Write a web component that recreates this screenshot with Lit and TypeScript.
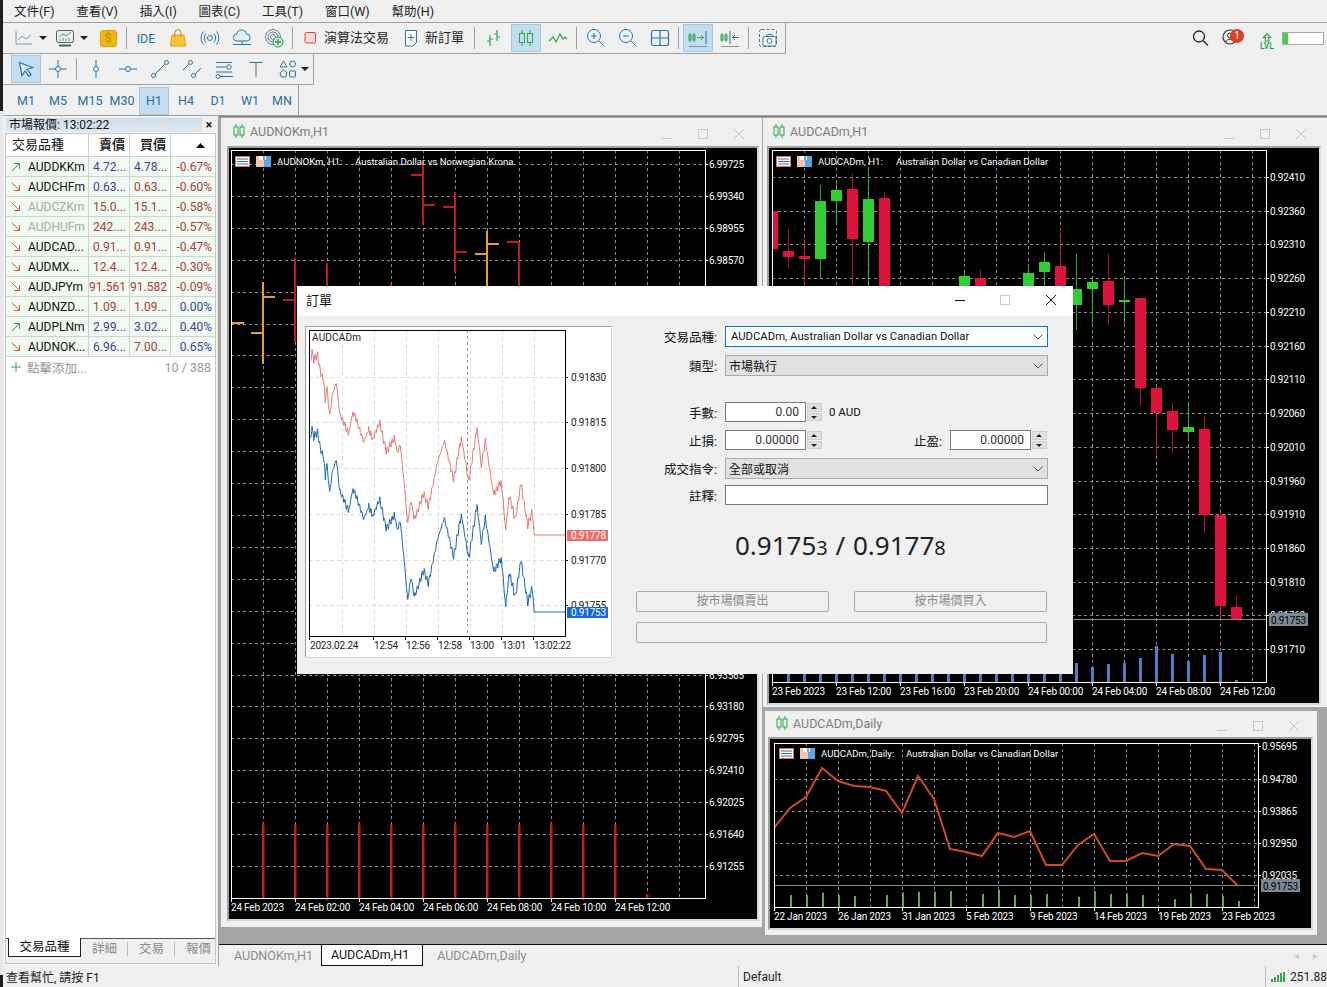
import { LitElement, html, css, svg } from 'lit';
import { customElement, property } from 'lit/decorators.js';

// ---- toolbar icons ----
const i = (body: unknown) => html`<svg class="ic" viewBox="0 0 20 20" width="20" height="20" fill="none">${body}</svg>`;
const BLUE = '#2b73a8';
const GREEN = '#2fa84f';
const icons: Record<string, unknown> = {
  line: i(svg`<path d="M2 3v13h16" stroke="#8a99a6"/><path d="M4 12l4-4 4 3 5-4" stroke="#5aa3d0"/>`),
  monitor: i(svg`<rect x="1.5" y="2.5" width="17" height="12" rx="2" stroke="#4a5a66"/><path d="M4 9l4-3 3 2 5-4" stroke="#2fa84f"/><path d="M5 13v-2M8 13v-3M11 13v-2M14 13v-3" stroke="#2fa84f"/><path d="M4 17.5h12" stroke="#4a5a66" stroke-width="2"/>`),
  bag: i(svg`<path d="M4 7h12l1.5 11h-15z" fill="#f7c531" stroke="#e0a010"/><path d="M7 9V4.5a3 3 0 016 0V9" stroke="#c98a10"/>`),
  signal: i(svg`<circle cx="10" cy="10" r="2.5" stroke="${BLUE}"/><path d="M6 5.5a7 7 0 000 9M14 5.5a7 7 0 010 9M3.5 3.5a10 10 0 000 13M16.5 3.5a10 10 0 010 13" stroke="${BLUE}"/>`),
  cloud: i(svg`<path d="M5 13a3.5 3.5 0 01-.3-7A5 5 0 0114.5 6a3.5 3.5 0 01.5 7z" fill="#dff0fa" stroke="${BLUE}"/><path d="M1 16.5h18M10 13v3" stroke="${BLUE}"/>`),
  vps: i(svg`<circle cx="9" cy="9" r="7.5" stroke="#5c8c96"/><circle cx="9" cy="9" r="5" stroke="#5c8c96"/><circle cx="9" cy="9" r="2.5" stroke="#5c8c96"/><circle cx="14" cy="14" r="5" fill="#cdeed6" stroke="#2a9d4a"/><path d="M14 11v6M11 14h6" stroke="#2a9d4a" stroke-width="1.3"/>`),
  stop: i(svg`<rect x="5" y="4.5" width="10.5" height="10.5" rx="1.5" fill="#fbdcd8" stroke="#d8443c"/>`),
  order: i(svg`<path d="M4.5 2.5h11v12l-3.5 3.5h-7.5z" fill="#fff" stroke="${BLUE}"/><path d="M10 6v7M6.5 9.5h7" stroke="${BLUE}"/>`),
  bars: i(svg`<path d="M6 7v11M6 13H3M6 11h3M13 2v11M13 6h-3M13 9h3" stroke="${GREEN}" stroke-width="1.2"/>`),
  candles: i(svg`<path d="M6 2v3M6 15v3M14 2v3M14 15v3" stroke="${GREEN}"/><rect x="3.5" y="5.5" width="5" height="9" stroke="${GREEN}"/><rect x="11.5" y="5.5" width="5" height="9" stroke="${GREEN}"/>`),
  zig: i(svg`<path d="M1 13l4-4 3 5 4-8 3 5 2-2 2 2" stroke="${GREEN}" stroke-width="1.2"/>`),
  zin: i(svg`<circle cx="8" cy="8" r="6.5" stroke="${BLUE}" fill="#eaf5fb"/><path d="M12.5 12.5l6 6" stroke="${BLUE}"/><path d="M8 5v6M5 8h6" stroke="${BLUE}"/>`),
  zout: i(svg`<circle cx="8" cy="8" r="6.5" stroke="${BLUE}" fill="#eaf5fb"/><path d="M12.5 12.5l6 6" stroke="${BLUE}"/><path d="M5 8h6" stroke="${BLUE}"/>`),
  tile: i(svg`<rect x="1.5" y="2.5" width="17" height="15" rx="2" fill="#eaf5fb" stroke="${BLUE}" stroke-width="1.2"/><path d="M10 3v14M2 10h16" stroke="${BLUE}" stroke-width="1.2"/>`),
  auto: i(svg`<path d="M2 5v9M6 5v9" stroke="${GREEN}"/><rect x="1" y="7" width="2" height="5" stroke="${GREEN}" fill="none"/><rect x="5" y="7" width="2" height="5" stroke="${GREEN}" fill="none"/><path d="M9 9.5h6M13 7l2.5 2.5L13 12" stroke="${GREEN}"/><path d="M18 3v13" stroke="${BLUE}"/><path d="M1 18.5h18" stroke="#909090"/>`),
  shift: i(svg`<path d="M2 5v9M6 5v9" stroke="${GREEN}"/><rect x="1" y="7" width="2" height="5" stroke="${GREEN}" fill="none"/><rect x="5" y="7" width="2" height="5" stroke="${GREEN}" fill="none"/><path d="M10 3v13" stroke="${BLUE}"/><path d="M19 9.5h-6M15 7l-2.5 2.5L15 12" stroke="${BLUE}"/><path d="M1 18.5h18" stroke="#909090"/>`),
  shot: i(svg`<rect x="1.5" y="1.5" width="17" height="17" rx="2" stroke="#3f6f8f" stroke-dasharray="3 2"/><rect x="5" y="8.5" width="13" height="9.5" rx="1.5" fill="#fff" stroke="${BLUE}"/><circle cx="11.5" cy="13" r="2.5" stroke="${BLUE}"/><path d="M8 8.5l1.5-2h4l1.5 2" stroke="${BLUE}"/>`),
  cursor: i(svg`<path d="M3.5 3.5l13 5-5.5 2 4 5-2 1.8-4-5.3-3 4.5z" fill="#d6eaf8" stroke="${BLUE}" stroke-width="1.2"/>`),
  cross: i(svg`<circle cx="10" cy="10" r="2.5" stroke="${BLUE}"/><path d="M10 1v6.5M10 12.5V19M1 10h6.5M12.5 10H19" stroke="${BLUE}"/>`),
  vline: i(svg`<circle cx="10" cy="10" r="2.5" stroke="${BLUE}"/><path d="M10 1v6.5M10 12.5V19" stroke="${BLUE}"/>`),
  hline: i(svg`<circle cx="10" cy="10" r="2.5" stroke="${BLUE}"/><path d="M1 10h6.5M12.5 10H19" stroke="${BLUE}"/>`),
  trend: i(svg`<circle cx="3.5" cy="16.5" r="2" stroke="${BLUE}"/><circle cx="16.5" cy="3.5" r="2" stroke="${BLUE}"/><path d="M5 15L15 5" stroke="${BLUE}"/>`),
  chan: i(svg`<circle cx="8.5" cy="3.5" r="2" stroke="${BLUE}"/><circle cx="11.5" cy="16.5" r="2" stroke="${BLUE}"/><path d="M7 5L1 11M13 15l6-6" stroke="${BLUE}"/>`),
  fib: i(svg`<path d="M2 3.5h16M2 8h10M2 13h16M6 17.5h13" stroke="${BLUE}"/><circle cx="15" cy="8" r="2.2" stroke="${BLUE}"/><circle cx="4" cy="17.5" r="2" stroke="${BLUE}"/>`),
  text: i(svg`<path d="M3.5 3.5h13M10 3.5V18" stroke="${BLUE}"/>`),
  shapes: i(svg`<path d="M5.5 2l3.5 6H2z" stroke="${BLUE}"/><circle cx="14.5" cy="5" r="3" stroke="${BLUE}"/><path d="M5.5 11l3.5 2.8-1.3 4.2H3.3L2 13.8z" stroke="${BLUE}"/><rect x="11.5" y="12" width="6" height="6" rx="1" stroke="${BLUE}"/>`),
  search: i(svg`<circle cx="9" cy="8.5" r="5.5" stroke="#222" stroke-width="1.3"/><path d="M13 12.5l5 5" stroke="#222" stroke-width="1.3"/>`),
  user: i(svg`<circle cx="9" cy="9" r="7" stroke="#333" stroke-width="1.2"/><circle cx="9" cy="7.5" r="2.5" stroke="#333"/><path d="M4.5 14a5 5 0 019 0" stroke="#333"/>`),
};
const ic = (name: string) => icons[name];
const caret = html`<span class="caret"></span>`;

const candleGlyph = html`<svg viewBox="0 0 12 14" width="12" height="14" fill="none" stroke="#2aa84a">
  <path d="M3 0v3M3 11v3M9 0v3M9 11v3"/><rect x="1" y="3" width="4" height="8"/><rect x="7" y="3" width="4" height="8"/></svg>`;

// ---- chart pieces ----
const range = (from: number, to: number, step: number) => {
  const out: number[] = [];
  for (let v = from; v <= to + 0.01; v += step) out.push(v);
  return out;
};
const px = (n: number) => Math.round(n) + 0.5;

interface Box { l: number; t: number; r: number; b: number; }

const gridLines = (xs: number[], ys: number[], b: Box, cls = 'g') => svg`
  ${xs.map((x) => svg`<line class=${cls} x1=${px(x)} x2=${px(x)} y1=${b.t} y2=${b.b}></line>`)}
  ${ys.map((y) => svg`<line class=${cls} x1=${b.l} x2=${b.r} y1=${px(y)} y2=${px(y)}></line>`)}`;

const frameRect = (b: Box, cls = 'pf') =>
  svg`<rect class=${cls} x=${b.l + 0.5} y=${b.t + 0.5} width=${b.r - b.l} height=${b.b - b.t}></rect>`;

const priceAxis = (b: Box, ys: number[], labels: string[]) => svg`
  ${ys.map((y, n) => svg`
    <line class="tick" x1=${b.r} x2=${b.r + 3} y1=${px(y)} y2=${px(y)}></line>
    <text class="ax" x=${b.r + 4} y=${y + 4}>${labels[n]}</text>`)}`;

const timeAxis = (b: Box, items: [number, string][], ty: number) => svg`
  ${items.map(([x, t]) => svg`
    <line class="tick" x1=${px(x)} x2=${px(x)} y1=${b.b} y2=${b.b + 4}></line>
    <text class="ax" x=${x} y=${ty}>${t}</text>`)}`;

const legend = (x: number, a: string, bx: number, b: string, tx = x + 42) => svg`
  <g transform="translate(${x} 156)">
    <rect x="0.5" y="0.5" width="14" height="10" fill="#fff" stroke="#e07060"></rect>
    <path d="M2 3h11M2 5.5h11M2 8h11" stroke="#3070c0"></path>
    <path d="M21 0h8v11h-8z" fill="#f6c4b4"></path>
    <path d="M29 0h7v11h-7z" fill="#5aa8e8"></path>
    <path d="M24 0h7v4h-7z" fill="#fff"></path>
    <path d="M29 0v4" stroke="#333"></path>
  </g>
  <text class="lg" x=${tx} y="165">${a}</text>
  <text class="lg" x=${bx} y="165">${b}</text>`;

const chartSvg = (x: number, y: number, w: number, h: number, body: unknown) => html`
  <svg class="chart" viewBox="${x} ${y} ${w} ${h}" width=${w} height=${h}>${body}</svg>`;

// AUDNOKm,H1 hlc bars: x, high, low, open tick, close tick, colour
const RED = '#c81818';
const ORG = '#e2a12e';
const nokBars: [number, number, number, number | null, number | null, string][] = [
  [232, 323, 323, null, 323, ORG],
  [263, 282, 364, 333, 297, ORG],
  [295, 258, 342, 300, null, RED],
  [327, 263, 300, null, null, RED],
  [391, 284, 300, null, null, RED],
  [423, 162, 223, 175, 205, RED],
  [455, 192, 272, 207, 252, RED],
  [487, 231, 300, 254, 244, ORG],
  [519, 242, 300, 242, null, RED],
];

const nokChart = () => {
  const b: Box = { l: 231, t: 150, r: 705, b: 898 };
  const ys = range(0, 22, 1).map((k) => 164 + k * 31.91);
  const labels = ys.map((_, k) => (6.99725 - k * 0.00385).toFixed(5));
  const vols = range(263, 615, 32);
  const times: [number, string][] = ['24 Feb 2023', '24 Feb 02:00', '24 Feb 04:00', '24 Feb 06:00', '24 Feb 08:00', '24 Feb 10:00', '24 Feb 12:00']
    .map((t, n) => [231 + n * 64, t]);
  return chartSvg(229, 148, 529, 771, svg`
    ${gridLines(range(263, 679, 32), ys, b)}
    ${nokBars.map(([x, hi, lo, o, c, col]) => svg`
      <path d="M${x} ${hi}V${lo}${o ? `M${x - 12} ${o}H${x}` : ''}${c ? `M${x} ${c}H${x + 12}` : ''}" stroke=${col} stroke-width="2" fill="none" shape-rendering="crispEdges"></path>`)}
    ${vols.map((x, n) => svg`<rect x=${x - 1} y=${n % 3 === 0 ? 823 : 825} width="2.5" height="75" fill="#c41c1c"></rect>`)}
    <rect x="646" y="894" width="2.5" height="4" fill="#c41c1c"></rect>
    ${frameRect(b)}
    ${priceAxis(b, ys, labels)}
    ${timeAxis(b, times, 911)}
    ${legend(235, 'AUDNOKm, H1:', 355, 'Australian Dollar vs Norwegian Krona')}
  `);
};

// AUDCADm,H1 candles: x, high, low, open/top, bottom
const cad: [number, number, number, number, number][] = [
  [788, 229, 268, 251, 257],
  [804, 235, 300, 256, 259],
  [852, 174, 300, 189, 239],
  [884, 192, 300, 198, 300],
  [980, 270, 300, 278, 300],
  [1060, 228, 300, 266, 300],
  [1108, 254, 325, 281, 305],
  [1140, 298, 406, 298, 388],
  [1156, 387, 455, 388, 413],
  [1172, 403, 453, 411, 430],
  [1204, 416, 533, 429, 515],
  [1220, 509, 618, 515, 606],
  [1236, 596, 620, 607, 620],
];
const cadUp: [number, number, number, number, number][] = [
  [820, 185, 278, 201, 259],
  [836, 180, 225, 190, 201],
  [868, 167, 300, 199, 242],
  [964, 270, 300, 276, 300],
  [1028, 265, 300, 273, 300],
  [1044, 252, 300, 262, 272],
  [1076, 254, 330, 289, 305],
  [1092, 277, 327, 282, 289],
  [1124, 276, 327, 300, 302],
  [1188, 402, 441, 427, 432],
];
const cadVols: [number, number][] = [
  [1076, 663], [1092, 667], [1108, 664], [1124, 663], [1140, 658], [1156, 646],
  [1172, 654], [1188, 661], [1204, 655], [1220, 652], [1236, 680],
];

const candle = (c: [number, number, number, number, number], col: string) => svg`
  <line x1=${c[0] + 0.5} x2=${c[0] + 0.5} y1=${c[1]} y2=${c[2]} stroke=${col} opacity="0.8"></line>
  <rect x=${c[0] - 5} y=${c[3]} width="11" height=${c[4] - c[3]} fill=${col}></rect>`;

const cadChart = () => {
  const b: Box = { l: 772, t: 150, r: 1266, b: 682 };
  const ys = range(0, 14, 1).map((k) => 177 + k * 33.73);
  const labels = ys.map((_, k) => (0.9241 - k * 0.0005).toFixed(5));
  const times: [number, string][] = ['23 Feb 2023', '23 Feb 12:00', '23 Feb 16:00', '23 Feb 20:00', '24 Feb 00:00', '24 Feb 04:00', '24 Feb 08:00', '24 Feb 12:00']
    .map((t, n) => [772 + n * 64, t]);
  return chartSvg(769, 148, 550, 555, svg`
    ${gridLines(range(804, 1252, 32), ys, b)}
    ${range(788, 1060, 16).map((x) => svg`<rect x=${x - 1} y="664" width="3" height="18" fill="#4c7fc4"></rect>`)}
    ${cadVols.map(([x, y]) => svg`<rect x=${x - 1} y=${y} width="3" height=${682 - y} fill="#4c7fc4"></rect>`)}
    <rect x="772" y="211" width="6" height="38" fill="#dc143c"></rect>
    ${cad.map((c) => candle(c, '#dc143c'))}
    ${cadUp.map((c) => candle(c, '#32cd32'))}
    <line class="pl" x1="772" x2="1266" y1="619.5" y2="619.5"></line>
    ${frameRect(b)}
    ${priceAxis(b, ys, labels)}
    <rect x="1269" y="613" width="39" height="13" fill="#7b8794"></rect>
    <text class="ax dk" x="1271" y="623.5">0.91753</text>
    ${timeAxis(b, times, 695)}
    ${legend(776, 'AUDCADm, H1:', 896, 'Australian Dollar vs Canadian Dollar')}
  `);
};

const dailyLine = [828, 808, 797, 768, 781, 786, 787, 791, 813, 776, 799, 849, 852, 856, 833, 837, 831, 865, 865, 845, 834, 861, 861, 853, 856, 844, 846, 869, 870, 886];
const dailyVols: [number, number][] = [
  [790, 555], [806, 555], [822, 548], [838, 555], [854, 558], [886, 555], [902, 547], [918, 545], [934, 545], [950, 543],
  [982, 552], [998, 540], [1014, 555], [1030, 555], [1046, 552], [1078, 560], [1094, 543], [1110, 552], [1126, 550], [1142, 555],
  [1174, 567], [1190, 550], [1206, 552], [1222, 558], [1238, 573],
];

const dailyChart = () => {
  const b: Box = { l: 774, t: 743, r: 1258, b: 907 };
  const ys = [746, 779, 811, 843, 875];
  const labels = ['0.95695', '0.94780', '0.93865', '0.92950', '0.92035'];
  const times: [number, string][] = ['22 Jan 2023', '26 Jan 2023', '31 Jan 2023', '5 Feb 2023', '9 Feb 2023', '14 Feb 2023', '19 Feb 2023', '23 Feb 2023']
    .map((t, n) => [774 + n * 64, t]);
  return chartSvg(770, 739, 541, 189, svg`
    ${gridLines(range(806, 1254, 32), ys.slice(1), b)}
    ${dailyVols.map(([x, z]) => svg`<rect x=${x} y=${710 + z / 3} width="2" height=${907 - 710 - z / 3} fill="#5ea35e"></rect>`)}
    <polyline points=${dailyLine.map((y, n) => `${774 + n * 16},${y}`).join(' ')} fill="none" stroke="#d24a1e" stroke-width="2"></polyline>
    <line class="pl" x1="774" x2="1258" y1="885.5" y2="885.5"></line>
    ${frameRect(b)}
    ${priceAxis(b, ys, labels)}
    <rect x="1261" y="879" width="39" height="13" fill="#7b8794"></rect>
    <text class="ax dk" x="1263" y="889.5">0.91753</text>
    ${timeAxis(b, times, 920)}
    <g transform="translate(0 592)">${legend(779, 'AUDCADm, Daily:', 906, 'Australian Dollar vs Canadian Dollar', 821)}</g>
  `);
};

// tick chart in the order dialog, zoom coordinates of the ask line
const askKeys = [[40, 238], [45, 190], [50, 225], [62, 210], [70, 260], [80, 285], [85, 345], [90, 310], [98, 392], [106, 330], [118, 292], [128, 385], [155, 447], [168, 378], [180, 410], [200, 470], [215, 435], [228, 460], [248, 412], [268, 500], [293, 458], [300, 505], [310, 478], [322, 600], [332, 715], [342, 645], [352, 705], [380, 625], [394, 665], [422, 530], [442, 468], [470, 585], [493, 457], [515, 590], [540, 430], [553, 540], [565, 467], [590, 630], [613, 588], [626, 733], [637, 632], [655, 705], [672, 595], [692, 722], [705, 680], [712, 750]];

const tickPoints = () => {
  const pts: [number, number][] = [];
  for (let n = 0; n < askKeys.length - 1; n++) {
    const [x0, y0] = askKeys[n];
    const [x1, y1] = askKeys[n + 1];
    for (let zx = x0; zx < x1; zx += 2) {
      const f = (zx - x0) / (x1 - x0);
      const wob = Math.sin(zx * 2.3) * 7 + Math.sin(zx * 0.9) * 5;
      pts.push([297 + zx / 3, 285 + (y0 + (y1 - y0) * f + wob) / 3]);
    }
  }
  pts.push([534, 535], [565, 535]);
  return pts;
};

const tickChart = () => {
  const b: Box = { l: 309, t: 330, r: 565, b: 636 };
  const ys = [377, 422, 468, 514, 560, 605];
  const labels = ['0.91830', '0.91815', '0.91800', '0.91785', '0.91770', '0.91755'];
  const pts = tickPoints();
  const ask = pts.map(([x, y]) => `${x.toFixed(1)},${y.toFixed(1)}`).join(' ');
  const bid = pts.map(([x, y]) => `${x.toFixed(1)},${(y + 77).toFixed(1)}`).join(' ');
  const times: [number, string][] = [[310, '2023.02.24'], [374, '12:54'], [406, '12:56'], [438, '12:58'], [470, '13:00'], [502, '13:01'], [534, '13:02:22']];
  return chartSvg(305, 326, 307, 332, svg`
    <rect x="305" y="326" width="307" height="332" fill="#fff"></rect>
    <path d="M305.5 658V326.5H612" fill="none" stroke="#a0a0a0"></path>
    <path d="M611.5 326V657.5H305" fill="none" stroke="#d8d8d8"></path>
    ${gridLines([342, 374, 406, 438, 470, 502, 534], ys, b, 'gl')}
    <line x1="467.5" x2="467.5" y1="330" y2="636" stroke="#999" stroke-dasharray="3 3"></line>
    <polyline points=${ask} fill="none" stroke="#e27c78"></polyline>
    <polyline points=${bid} fill="none" stroke="#1f66b8"></polyline>
    ${frameRect(b, 'pk')}
    ${ys.map((y, n) => svg`
      <line class="tk" x1="565" x2="568" y1=${px(y)} y2=${px(y)}></line>
      <text class="axk" x="571" y=${y + 4}>${labels[n]}</text>`)}
    ${times.map(([x, t]) => svg`
      <line class="tk" x1=${px(x - 1)} x2=${px(x - 1)} y1="636" y2="640"></line>
      <text class="axk" x=${x} y="649">${t}</text>`)}
    <text class="axk sym" x="312" y="341">AUDCADm</text>
    <rect x="567" y="530" width="41" height="11" fill="#f06c6c"></rect>
    <text class="axw" x="571" y="539">0.91778</text>
    <rect x="567" y="607" width="41" height="11" fill="#1468de"></rect>
    <text class="axw" x="571" y="616">0.91753</text>
  `);
};

const chartStyles = css`
  .chart { display: block; font-family: Roboto, sans-serif; }
  .g { stroke: #8c8c8c; stroke-dasharray: 3 3; shape-rendering: crispEdges; }
  .gl { stroke: #dcdcdc; stroke-dasharray: 4 3; shape-rendering: crispEdges; }
  .pf { fill: none; stroke: #fff; shape-rendering: crispEdges; }
  .pk { fill: none; stroke: #000; shape-rendering: crispEdges; }
  .pl { stroke: #7f8a95; shape-rendering: crispEdges; }
  .tick { stroke: #fff; shape-rendering: crispEdges; }
  .tk { stroke: #000; shape-rendering: crispEdges; }
  .ax, .axk, .axw { font-size: 10px; letter-spacing: -0.2px; }
  .ax { fill: #fff; }
  .ax.dk { fill: #000; }
  .axk { fill: #222; }
  .axk.sym { letter-spacing: 0.2px; }
  .axw { fill: #fff; }
  .lg { fill: #fff; font-size: 9.6px; }
`;

// ---- chart window ----
@customElement('mt-window')
export class MtWindow extends LitElement {
  @property() heading = '';
  static styles = css`
    :host {
      position: absolute;
      display: flex;
      flex-direction: column;
      box-sizing: border-box;
      background: #f0f0f0;
      font-family: Roboto, "Noto Sans CJK TC", sans-serif;
    }
    :host(.w1) { left: 2px; top: 1px; width: 541px; height: 809px; padding: 0 3px 6px 6px; }
    :host(.w2) { left: 544px; top: 1px; width: 564px; height: 589px; padding: 0 6px 2px 4px; }
    :host(.w3) { left: 546px; top: 594px; width: 552px; height: 224px; padding: 0 4px 5px 3px; }
    .bar { display: flex; align-items: center; height: 28px; padding-bottom: 2px; box-sizing: border-box; color: #7d7d7d; font-size: 12.5px; }
    :host(.w3) .bar { height: 26px; }
    .glyph { margin: 0 5px 0 6px; display: flex; }
    :host(.w3) .glyph { margin-left: 8px; }
    .btns { margin-left: auto; display: flex; padding-right: 2px; }
    :host(.w3) .btns { padding-right: 1px; }
    .btns svg { display: block; width: 36px; height: 12px; margin-top: 5px; }
    .frame { flex: 1; border: 2px solid #a0a0a0; border-right-color: #d8d8d8; border-bottom-color: #d8d8d8; background: #000; min-height: 0; }
  `;
  render() {
    return html`
      <div class="bar">
        <span class="glyph">${candleGlyph}</span>${this.heading}
        <span class="btns">
          <svg viewBox="0 0 36 12"><path d="M13 10.5h10" stroke="#c8c8c8"></path></svg>
          <svg viewBox="0 0 36 12"><rect x="13.5" y="1.5" width="9" height="9" fill="none" stroke="#c8c8c8"></rect></svg>
          <svg viewBox="0 0 36 12"><path d="M13 1l10 10M23 1L13 11" stroke="#c8c8c8"></path></svg>
        </span>
      </div>
      <div class="frame"><slot></slot></div>`;
  }
}

// ---- market watch ----
type Q = [string, string, string, string, string, string, string, string];
const quotes: Q[] = [
  ['u', 'AUDDKKm', '', '4.72...', 'b', '4.78...', 'b', '-0.67%'],
  ['d', 'AUDCHFm', '', '0.63...', 'b', '0.63...', 'r', '-0.60%'],
  ['d', 'AUDCZKm', 'off', '15.0...', 'r', '15.1...', 'r', '-0.58%'],
  ['d', 'AUDHUFm', 'off', '242....', 'r', '243....', 'r', '-0.57%'],
  ['d', 'AUDCAD...', '', '0.91...', 'r', '0.91...', 'r', '-0.47%'],
  ['d', 'AUDMX...', '', '12.4...', 'r', '12.4...', 'r', '-0.30%'],
  ['d', 'AUDJPYm', '', '91.561', 'r', '91.582', 'r', '-0.09%'],
  ['d', 'AUDNZD...', '', '1.09...', 'r', '1.09...', 'r', '0.00%'],
  ['u', 'AUDPLNm', '', '2.99...', 'b', '3.02...', 'b', '0.40%'],
  ['d', 'AUDNOK...', '', '6.96...', 'b', '7.00...', 'r', '0.65%'],
];

@customElement('market-watch')
export class MarketWatch extends LitElement {
  static styles = css`
    :host { display: flex; flex-direction: column; width: 216px; box-sizing: border-box; padding: 1px 2px 2px 2px; background: #f0f0f0; border-right: 1px solid #a0a0a0; font-family: Roboto, "Noto Sans CJK TC", sans-serif; }
    .head { display: flex; align-items: center; height: 14px; margin: 1px 0 1px 1px; }
    .title { flex: 1; background: linear-gradient(#cfdde9, #dfe8f0); height: 14px; line-height: 14px; font-size: 12px; padding-left: 3px; color: #111; }
    .x { width: 14px; text-align: center; font-weight: 700; font-size: 12px; line-height: 14px; }
    .box { flex: 1; display: flex; flex-direction: column; background: #fff; border: 1px solid #c8c8c8; min-height: 0; }
    .row { display: grid; grid-template-columns: 83px 41px 41px 1fr; height: 20px; box-sizing: border-box; border-bottom: 1px solid #d2d2d2; font-size: 12px; line-height: 20px; color: #111; }
    .row > div { border-right: 1px solid #d2d2d2; white-space: nowrap; overflow: hidden; }
    .row > div:last-child { border-right: 0; }
    .hd { height: 23px; line-height: 22px; background: #fff; font-size: 13px; }
    .hd div { padding: 0 4px; text-align: right; font-weight: 500; }
    .hd .n { text-align: left; font-weight: 400; }
    .sort { margin-right: 6px; }
    .q { background: #f1fbf1; }
    .n { display: flex; align-items: center; gap: 7px; padding-left: 5px; }
    .hd .n { padding-left: 6px; }
    .num { text-align: right; padding-right: 3px; }
    .b { color: #35459e; }
    .r { color: #b03a3a; }
    .off { color: #a8a8a8; }
    .add { display: flex; align-items: center; justify-content: space-between; height: 20px; padding: 0 4px 0 5px; color: #999; font-size: 12.5px; }
    .add svg { margin-right: 6px; }
    .add span { display: flex; align-items: center; }
    .fill { flex: 1; }
    .tabs { display: flex; align-items: flex-start; height: 25px; background: #f0f0f0; color: #8c8c8c; font-size: 12.5px; border-top: 1px solid #555; margin-top: -1px; box-sizing: border-box; white-space: nowrap; }
    .tab { flex: none; padding: 0 10px 0 11px; height: 14px; margin-top: 3px; line-height: 14px; }
    .tab + .tab + .tab { border-left: 1px solid #bbb; }
    .tab.on { color: #111; background: #fff; border: 1px solid #222; border-top: 0; width: 73px; height: 19px; line-height: 18px; box-sizing: border-box; text-align: center; padding: 0; margin-top: -1px; margin-left: 2px; }
  `;
  private arrow(dir: string) {
    return dir === 'u'
      ? html`<svg width="10" height="10" viewBox="0 0 10 10" fill="none" stroke="#2aa84a"><path d="M1 9l7-7M3 1.5h5.5V7"></path></svg>`
      : html`<svg width="10" height="10" viewBox="0 0 10 10" fill="none" stroke="#d8583c"><path d="M1 1l7 7M3 8.5h5.5V3"></path></svg>`;
  }
  render() {
    return html`
      <div class="head"><div class="title">市場報價: 13:02:22</div><div class="x">×</div></div>
      <div class="box">
        <div class="row hd">
          <div class="n">交易品種</div><div>賣價</div><div>買價</div>
          <div><svg class="sort" width="9" height="6" viewBox="0 0 9 6"><path d="M4.5 0L9 5H0z" fill="#111"></path></svg></div>
        </div>
        ${quotes.map((q) => html`
          <div class="row q">
            <div class="n ${q[2]}">${this.arrow(q[0])}${q[1]}</div>
            <div class="num ${q[4]}">${q[3]}</div>
            <div class="num ${q[6]}">${q[5]}</div>
            <div class="num ${q[7].startsWith('-') ? 'r' : 'b'}">${q[7]}</div>
          </div>`)}
        <div class="add">
          <span><svg width="10" height="10" viewBox="0 0 10 10" stroke="#2aa84a"><path d="M5 0v10M0 5h10"></path></svg>點擊添加...</span>
          <span>10 / 388</span>
        </div>
        <div class="fill"></div>
        <div class="tabs">
          <div class="tab on">交易品種</div>
          <div class="tab">詳細</div>
          <div class="tab">交易</div>
          <div class="tab">報價</div>
        </div>
      </div>`;
  }
}

// ---- order dialog ----
const chevron = html`<svg class="chev" width="10" height="6" viewBox="0 0 10 6" fill="none" stroke="#555"><path d="M0.5 0.5L5 5l4.5-4.5"></path></svg>`;
const spin = html`<div class="spin"><i class="up"></i><i class="dn"></i></div>`;

@customElement('order-dialog')
export class OrderDialog extends LitElement {
  static styles = [chartStyles, css`
    :host { position: absolute; left: 297px; top: 286px; width: 776px; height: 388px; background: #f0f0f0; font-family: Roboto, "Noto Sans CJK TC", sans-serif; font-size: 12px; color: #111; z-index: 5; }
    .cap { display: flex; align-items: center; height: 30px; box-sizing: border-box; background: #fff; padding: 0 0 3px 9px; font-size: 13px; }
    .cap .ctl { margin-left: auto; display: flex; }
    .cap svg { display: block; width: 45px; height: 12px; }
    .body { display: flex; padding: 10px 0 0 8px; }
    .form { margin-left: 13px; width: 423px; }
    .row { display: flex; align-items: center; height: 21px; margin-bottom: 8px; }
    .row.tall { height: 20px; }
    label { width: 100px; padding-right: 8px; box-sizing: border-box; text-align: right; flex: none; font-size: 12.5px; }
    .sel { width: 323px; height: 100%; box-sizing: border-box; background: #e1e1e1; border: 1px solid #adadad; display: flex; align-items: center; justify-content: space-between; padding: 0 4px 0 3px; }
    .sel.on { background: #fff; border-color: #0078d7; padding-left: 5px; font-size: 11.3px; }
    .inp { width: 81px; height: 100%; box-sizing: border-box; background: #fff; border: 1px solid #7a7a7a; text-align: right; padding-right: 6px; line-height: 18px; color: #333; }
    .wide { width: 323px; }
    .spin { width: 15px; height: 18px; margin-left: 1px; display: flex; flex-direction: column; gap: 1px; }
    .spin i { flex: 1; background: #e1e1e1; border: 1px solid #cfcfcf; position: relative; }
    .spin i::after { content: ""; position: absolute; left: 3px; top: 2px; border-left: 3px solid transparent; border-right: 3px solid transparent; }
    .spin .up::after { border-bottom: 3px solid #222; }
    .spin .dn::after { border-top: 3px solid #222; }
    .aud { margin-left: 7px; font-size: 11.5px; }
    .tp { width: 75px; padding-right: 8px; margin-left: 53px; }
    .gap { margin-top: 26px; }
    .tight { margin-bottom: 6px; }
    .price { margin: 22px 0 0 110px; height: 36px; line-height: 36px; font-family: "Noto Sans", sans-serif; font-size: 26px; color: #222; white-space: nowrap; word-spacing: 1px; }
    .price small { font-size: 20px; }
    .btns { display: flex; gap: 25px; margin: 28px 0 10px 11px; }
    .btn { width: 193px; height: 21px; box-sizing: border-box; border: 1px solid #adadad; border-radius: 2px; text-align: center; line-height: 19px; color: #8a8a8a; }
    .btn.full { width: 411px; margin-left: 11px; }
  `];
  render() {
    return html`
      <div class="cap">訂單
        <span class="ctl">
          <svg viewBox="0 0 45 12"><path d="M17 6.5h10" stroke="#111"></path></svg>
          <svg viewBox="0 0 45 12"><rect x="17.5" y="1.5" width="9" height="9" fill="none" stroke="#ccc"></rect></svg>
          <svg viewBox="0 0 45 12"><path d="M18 1l10 10M28 1L18 11" stroke="#111"></path></svg>
        </span>
      </div>
      <div class="body">
        ${tickChart()}
        <div class="form">
          <div class="row"><label>交易品種:</label><div class="sel on">AUDCADm, Australian Dollar vs Canadian Dollar${chevron}</div></div>
          <div class="row"><label>類型:</label><div class="sel">市場執行${chevron}</div></div>
          <div class="row tall gap"><label>手數:</label><div class="inp">0.00</div>${spin}<span class="aud">0 AUD</span></div>
          <div class="row tall"><label>止損:</label><div class="inp">0.00000</div>${spin}<label class="tp">止盈:</label><div class="inp">0.00000</div>${spin}</div>
          <div class="row tight"><label>成交指令:</label><div class="sel">全部或取消${chevron}</div></div>
          <div class="row tall"><label>註釋:</label><div class="inp wide"></div></div>
          <div class="price">0.9175<small>3</small> / 0.9177<small>8</small></div>
          <div class="btns"><div class="btn">按市場價賣出</div><div class="btn">按市場價買入</div></div>
          <div class="btn full"></div>
        </div>
      </div>`;
  }
}

// ---- app ----
const menus = ['文件(F)', '查看(V)', '插入(I)', '圖表(C)', '工具(T)', '窗口(W)', '幫助(H)'];
const periods = ['M1', 'M5', 'M15', 'M30', 'H1', 'H4', 'D1', 'W1', 'MN'];

@customElement('app-root')
export class AppRoot extends LitElement {
  static styles = [chartStyles, css`
    :host { display: block; width: 1327px; height: 987px; position: relative; overflow: hidden; font-family: Roboto, "Noto Sans CJK TC", sans-serif; font-size: 12px; color: #111; background: #f0f0f0; }
    .shell { display: flex; height: 100%; }
    .strip { width: 3px; flex: none; background: linear-gradient(#1e1e1e 0 111px, #e8e8e8 111px 975px, #1e1e1e 975px); }
    .main { flex: 1; min-width: 0; display: flex; flex-direction: column; }
    .menu { display: flex; height: 23px; box-sizing: border-box; padding-bottom: 1px; border-bottom: 1px solid #a0a0a0; align-items: center; font-size: 12.5px; color: #222; }
    .menu span { padding: 0 10.9px; }
    .menu span:first-child { padding-left: 11px; }
    .tb { display: flex; height: 31px; box-sizing: border-box; }
    .grp { display: flex; align-items: center; box-sizing: border-box; height: 31px; border-bottom: 1px solid #a0a0a0; border-right: 1px solid #a0a0a0; }
    .g1 { padding-left: 5px; width: 783px; }
    .g2 { padding-left: 7px; width: 311px; }
    .g3 { padding-left: 7px; width: 296px; border-bottom: 0; }
    .t3 { border-bottom: 1px solid #a0a0a0; }
    .b { width: 32px; height: 28px; display: flex; align-items: center; justify-content: center; flex: none; box-sizing: border-box; }
    .on { background: #c3ddf2; box-shadow: inset 0 0 0 1px #a8c9e4; width: 30px; margin: 0 1px; }
    .ic { display: block; flex: none; }
    .ide { color: #2b73a8; font-size: 12.5px; }
    .usd { width: 17px; height: 17px; background: #f5b60e; border: 1px solid #e0a010; border-radius: 3px; box-sizing: border-box; color: #b8860b; font-size: 12px; line-height: 15px; text-align: center; }
    .sep { width: 1px; height: 22px; background: #a0a0a0; margin: 0 3px 0 2px; flex: none; }
    .cb { display: flex; align-items: center; height: 28px; flex: none; }
    .c1 { width: 40px; padding-left: 6px; box-sizing: border-box; }
    .c2 { width: 44px; padding-left: 7px; box-sizing: border-box; }
    .c3 { width: 40px; padding-left: 6px; box-sizing: border-box; }
    .c3 .caret { margin-left: 3px; }
    .caret { display: block; margin-left: 5px; border-top: 4px solid #222; border-left: 4px solid transparent; border-right: 4px solid transparent; flex: none; }
    .tx { display: flex; align-items: center; gap: 4px; height: 28px; flex: none; font-size: 13px; color: #222; box-sizing: border-box; }
    .tx b { font-weight: 400; margin-top: -3px; }
    .tx1 { width: 100px; padding-left: 4px; }
    .tx2 { width: 74px; padding-left: 5px; }
    .sep.s4 { margin-left: 4px; }
    .per { color: #2b6ea3; font-size: 12.5px; }
    .right { margin-left: auto; display: flex; align-items: center; height: 30px; }
    .badged { position: relative; margin-left: 11px; width: 20px; }
    .badge { position: absolute; left: 9px; top: 1px; width: 14px; height: 14px; border-radius: 50%; background: #e03c28; color: #fff; font-size: 10px; text-align: center; line-height: 14px; }
    .lvl { display: flex; flex-direction: column; align-items: center; margin: 6px 0 0 18px; color: #1aa03c; font-size: 8.5px; font-weight: 500; line-height: 8px; width: 16px; }
    .meter { width: 42px; height: 13px; box-sizing: border-box; margin: 0 3px 0 7px; background: #fff; border: 1px solid #a8a8a8; }
    .meter div { width: 5px; height: 100%; background: #45d045; }
    .work { flex: 1; display: flex; min-height: 0; }
    .center { flex: 1; min-width: 0; display: flex; flex-direction: column; }
    .mdi { flex: 1; position: relative; background: #a6a6a6; border-top: 1px solid #808080; }
    .wt { display: flex; height: 22px; box-sizing: border-box; align-items: stretch; background: #f0f0f0; border-top: 1px solid #111; color: #8c8c8c; font-size: 12.5px; line-height: 21px; }
    .wt span { padding: 0 13px 0 14px; }
    .wt span:first-child { padding: 0 8px 0 15px; }
    .wt .act { color: #111; background: #fff; border: 1px solid #111; border-top: 0; height: 21px; box-sizing: border-box; padding: 0 13px 0 9px; line-height: 20px; }
    .wt .arrows { margin-left: auto; color: #c8c8c8; padding: 0 9px 0 0; font-size: 10px; word-spacing: 12px; }
    .status { height: 21px; flex: none; display: flex; align-items: center; font-size: 12px; color: #222; }
    .status > div { height: 100%; display: flex; align-items: center; box-sizing: border-box; }
    .st1 { width: 736px; padding-left: 3px; border-right: 1px solid #c0c0c0; }
    .st2 { width: 527px; padding-left: 4px; border-right: 1px solid #c0c0c0; }
    .st3 { padding-left: 5px; gap: 5px; white-space: nowrap; }
  `];

  render() {
    const sep = html`<span class="sep"></span>`;
    const b = (n: string, on = false) => html`<span class="b ${on ? 'on' : ''}">${ic(n)}</span>`;
    return html`
      <div class="shell">
        <div class="strip"></div>
        <div class="main">
          <div class="menu">${menus.map((m) => html`<span>${m}</span>`)}</div>
          <div class="tb">
            <div class="grp g1">
              <span class="cb c1">${ic('line')}${caret}</span>
              <span class="cb c2">${ic('monitor')}${caret}</span>
              <span class="b"><span class="usd">$</span></span>
              ${sep}
              <span class="b ide">IDE</span>
              ${b('bag')}${b('signal')}${b('cloud')}${b('vps')}
              ${sep}
              <span class="tx tx1">${ic('stop')}<b>演算法交易</b></span>
              <span class="tx tx2">${ic('order')}<b>新訂單</b></span>
              <span class="sep s4"></span>
              ${b('bars')}${b('candles', true)}${b('zig')}
              ${sep}
              ${b('zin')}${b('zout')}${b('tile')}
              ${sep}
              ${b('auto', true)}${b('shift')}
              ${sep}
              ${b('shot')}
            </div>
            <div class="right">
              ${ic('search')}
              <span class="badged">${ic('user')}<span class="badge">1</span></span>
              <span class="lvl">
                <svg width="10" height="9" viewBox="0 0 12 11" fill="none" stroke="#1aa03c" stroke-width="1.3"><path d="M6 1L1.5 5.5H4V10h4V5.5h2.5z"></path></svg>
                <span>LVL</span>
              </span>
              <div class="meter"><div></div></div>
            </div>
          </div>
          <div class="tb">
            <div class="grp g2">
              ${b('cursor', true)}${b('cross')}
              ${sep}
              ${b('vline')}${b('hline')}${b('trend')}${b('chan')}${b('fib')}${b('text')}
              <span class="cb c3">${ic('shapes')}${caret}</span>
            </div>
          </div>
          <div class="tb t3">
            <div class="grp g3">
              ${periods.map((p) => html`<span class="b per ${p === 'H1' ? 'on' : ''}">${p}</span>`)}
            </div>
          </div>
          <div class="work">
            <market-watch></market-watch>
            <div class="center">
              <div class="mdi">
                <mt-window class="w1" heading="AUDNOKm,H1">${nokChart()}</mt-window>
                <mt-window class="w2" heading="AUDCADm,H1">${cadChart()}</mt-window>
                <mt-window class="w3" heading="AUDCADm,Daily">${dailyChart()}</mt-window>
              </div>
              <div class="wt">
                <span>AUDNOKm,H1</span><span class="act">AUDCADm,H1</span><span>AUDCADm,Daily</span>
                <span class="arrows">◂ ▸</span>
              </div>
            </div>
          </div>
          <div class="status">
            <div class="st1">查看幫忙, 請按 F1</div>
            <div class="st2">Default</div>
            <div class="st3">
              <svg width="14" height="10" viewBox="0 0 14 10" fill="#3aa84a"><rect x="0" y="7" width="2" height="3"></rect><rect x="3" y="5" width="2" height="5"></rect><rect x="6" y="3" width="2" height="7"></rect><rect x="9" y="1" width="2" height="9"></rect><rect x="12" y="0" width="2" height="10"></rect></svg>
              251.88
            </div>
          </div>
        </div>
      </div>
      <order-dialog></order-dialog>`;
  }
}
